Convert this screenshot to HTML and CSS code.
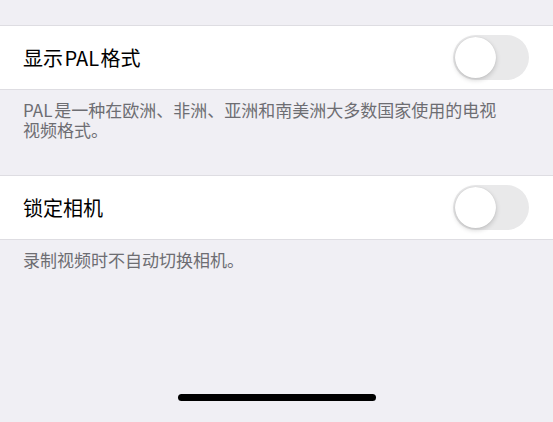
FILE: index.html
```html
<!DOCTYPE html>
<html lang="zh-CN">
<head>
    <meta charset="UTF-8">
    <meta name="viewport" content="width=device-width, initial-scale=1.0">
    <link rel="stylesheet" href="styles.css">
    <title>设置</title>
</head>
<body>
    <div class="pantalla">
        <div class="grupo">
            <div class="fila">
                <span class="etiqueta">显示 PAL 格式</span>
                <span class="interruptor"><span class="bola"></span></span>
            </div>
        </div>
        <p class="nota">PAL 是一种在欧洲、非洲、亚洲和南美洲大多数国家使用的电视视频格式。</p>

        <div class="grupo">
            <div class="fila">
                <span class="etiqueta">锁定相机</span>
                <span class="interruptor"><span class="bola"></span></span>
            </div>
        </div>
        <p class="nota">录制视频时不自动切换相机。</p>

        <div class="inicio"><span class="barra"></span></div>
    </div>
</body>
</html>
```
FILE: styles.css
```css
* {
    margin: 0;
    padding: 0;
    box-sizing: border-box;
    font-family: "Noto Sans CJK SC", "Noto Sans", sans-serif;
}
body {
    background-color: #f0eff4;
}
.pantalla {
    height: 422px;
    padding-top: 25px;
    display: flex;
    flex-direction: column;
}
.grupo {
    background-color: #fff;
    border-top: 1px solid #dedde2;
    border-bottom: 1px solid #dedde2;
}
.fila {
    height: 63px;
    display: flex;
    align-items: center;
    justify-content: space-between;
    padding: 0 24px 0 23px;
}
.etiqueta {
    font-size: 20px;
    color: #000;
    word-spacing: -3px;
}
.interruptor {
    width: 76px;
    height: 45px;
    border-radius: 23px;
    background-color: #e9e9ea;
    padding: 2px;
    display: flex;
}
.bola {
    width: 41px;
    height: 41px;
    border-radius: 50%;
    background-color: #fff;
    box-shadow: 0 2px 5px rgba(0, 0, 0, 0.18), 0 0 1px rgba(0, 0, 0, 0.15);
}
.nota {
    font-size: 17px;
    line-height: 20px;
    color: #6d6d72;
    padding: 10px 44px 35px 23px;
    word-spacing: -2px;
}
.inicio {
    margin-top: auto;
    height: 28px;
    display: flex;
    justify-content: center;
}
.barra {
    width: 198px;
    height: 7px;
    border-radius: 4px;
    background-color: #000;
}
```
